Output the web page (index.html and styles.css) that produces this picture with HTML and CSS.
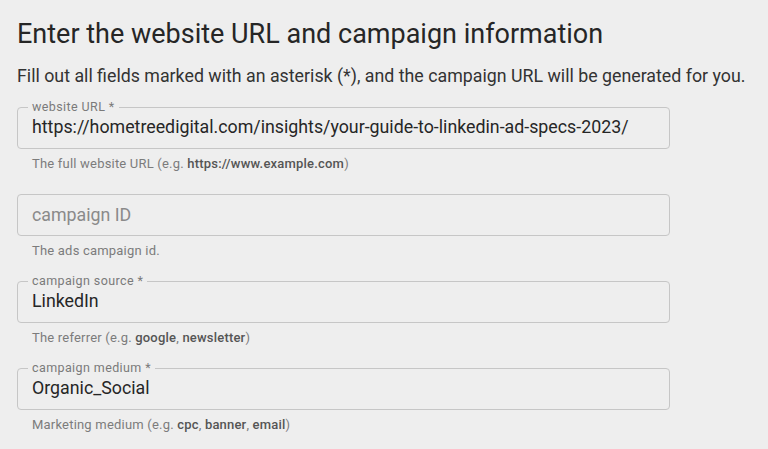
FILE: index.html
```html
<!DOCTYPE html>
<html lang="en">
<head>
<meta charset="utf-8">
<title>Campaign URL Builder</title>
<link rel="stylesheet" href="styles.css">
</head>
<body>
<main class="page">
  <h1 class="title">Enter the website URL and campaign information</h1>
  <p class="intro">Fill out all fields marked with an asterisk (*), and the campaign URL will be generated for you.</p>

  <div class="field">
    <div class="box box-filled">
      <span class="label">website URL *</span>
      <span class="value">https://hometreedigital.com/insights/your-guide-to-linkedin-ad-specs-2023/</span>
    </div>
    <p class="hint">The full website URL (e.g. <b>https://www.example.com</b>)</p>
  </div>

  <div class="field">
    <div class="box box-empty">
      <span class="placeholder">campaign ID</span>
    </div>
    <p class="hint">The ads campaign id.</p>
  </div>

  <div class="field">
    <div class="box box-filled">
      <span class="label">campaign source *</span>
      <span class="value">LinkedIn</span>
    </div>
    <p class="hint">The referrer (e.g. <b>google</b>, <b>newsletter</b>)</p>
  </div>

  <div class="field">
    <div class="box box-filled">
      <span class="label">campaign medium *</span>
      <span class="value">Organic_Social</span>
    </div>
    <p class="hint">Marketing medium (e.g. <b>cpc</b>, <b>banner</b>, <b>email</b>)</p>
  </div>
</main>
</body>
</html>
```

FILE: styles.css
```css
html, body {
  margin: 0;
  padding: 0;
  background: #eeeeee;
}

body {
  font-family: Roboto, "Noto Sans", Arial, sans-serif;
  color: #222222;
}

.page {
  padding: 17px 17px 0 17px;
}

.title {
  margin: 0;
  font-size: 27px;
  line-height: 34px;
  font-weight: 400;
  color: #262626;
}

.intro {
  margin: 14px 0 0 0;
  font-size: 17.8px;
  line-height: 22px;
  color: #333333;
}

.field {
  margin-top: 20px;
}

.field + .field {
  margin-top: 22px;
}

.box {
  position: relative;
  box-sizing: border-box;
  width: 653px;
  height: 42px;
  border: 1px solid #c6c6c6;
  border-radius: 4px;
  padding: 0 14px;
  display: flex;
  font-size: 17.8px;
  line-height: 20px;
}

.box-filled {
  padding-top: 9px;
}

.box-empty {
  padding-top: 10px;
}

.label {
  position: absolute;
  top: -8px;
  left: 10px;
  padding: 0 4px;
  background: #eeeeee;
  font-size: 12.5px;
  line-height: 14px;
  letter-spacing: 0.4px;
  color: #7a7a7a;
}

.value {
  color: #262626;
  white-space: nowrap;
}

.placeholder {
  color: #8a8a8a;
}

.hint {
  margin: 7px 0 0 15px;
  font-size: 13px;
  line-height: 16px;
  letter-spacing: 0.2px;
  color: #7c7c7c;
}

.hint b {
  font-weight: 500;
  color: #555555;
}
```
